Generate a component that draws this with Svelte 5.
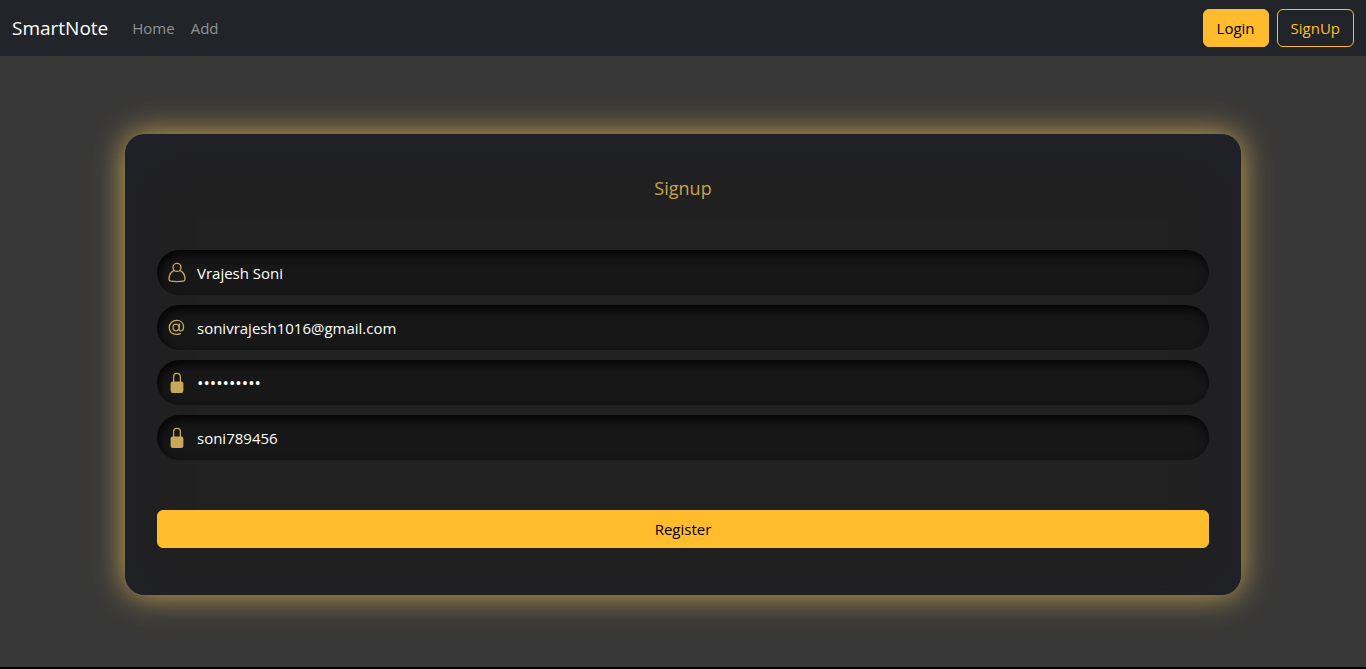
<script>
    let name = 'Vrajesh Soni'
    let email = 'sonivrajesh1016@gmail.com'
    let password = 'soni789456'
    let confirm = 'soni789456'
</script>

<div class="page">
    <nav class="navbar">
        <a class="brand" href="/">SmartNote</a>
        <a class="nav-link" href="/">Home</a>
        <a class="nav-link" href="/add">Add</a>
        <div class="actions">
            <button class="btn btn-warning" type="button">Login</button>
            <button class="btn btn-outline" type="button">SignUp</button>
        </div>
    </nav>

    <main class="container">
        <form class="card" on:submit|preventDefault>
            <h1 class="heading">Signup</h1>

            <div class="fields">
                <label class="field">
                    <svg class="icon" viewBox="0 0 20 22" aria-hidden="true">
                        <circle class="line" cx="10" cy="5.4" r="4" />
                        <path class="line" d="M7.2 8.4C4 9.7 2.2 12.7 2 17c0 1.3.6 2 1.800 2.100 4.200.6 8.200.6 12.400 0 1.200-.1 1.800-.8 1.800-2.100-.2-4.300-2-7.300-5.200-8.600" />
                    </svg>
                    <input type="text" aria-label="Name" bind:value={name} />
                </label>

                <label class="field">
                    <svg class="icon" viewBox="0 0 20 22" aria-hidden="true">
                        <ellipse class="line" cx="9" cy="10.5" rx="3" ry="3.4" />
                        <path class="line" d="M12.6 7.1l-.5 4.700c-.1 1.400.4 2.100 1.500 2.100 1.700 0 2.900-1.800 2.900-4.200 0-3.700-2.800-6.300-6.800-6.300-4.300 0-7.400 3-7.400 7.200 0 4.100 2.900 6.800 7.100 6.800 1.500 0 2.900-.3 4-.8" />
                    </svg>
                    <input type="email" aria-label="Email" bind:value={email} />
                </label>

                <label class="field">
                    <svg class="icon" viewBox="0 0 20 22" aria-hidden="true">
                        <path class="line" d="M6.600 10V5c0-2.300 1.300-3.700 3.400-3.700s3.400 1.400 3.400 3.700v5" />
                        <rect class="solid" x="3.6" y="9.5" width="12.8" height="11.5" rx="2.2" />
                    </svg>
                    <input class="password" type="password" aria-label="Password" bind:value={password} />
                </label>

                <label class="field">
                    <svg class="icon" viewBox="0 0 20 22" aria-hidden="true">
                        <path class="line" d="M6.600 10V5c0-2.300 1.300-3.700 3.400-3.700s3.400 1.400 3.400 3.700v5" />
                        <rect class="solid" x="3.6" y="9.5" width="12.8" height="11.5" rx="2.2" />
                    </svg>
                    <input type="text" aria-label="Confirm password" bind:value={confirm} />
                </label>
            </div>

            <button class="btn btn-warning" type="submit">Register</button>
        </form>
    </main>
</div>

<style>
    :global(body) {
        background: #000;
    }

    .page {
        min-height: 100vh;
        box-sizing: border-box;
        border-bottom: 2px solid #000;
        background: #383838;
        font-family: "Segoe UI", "Open Sans", "Noto Sans", sans-serif;
        font-size: 15px;
        line-height: 24px;
    }

    .navbar {
        display: flex;
        align-items: center;
        height: 56px;
        padding: 0 12px;
        background: #212529;
    }

    .brand {
        margin-right: 16px;
        color: #fff;
        font-size: 19px;
        text-decoration: none;
    }

    .nav-link {
        padding: 8px;
        color: #909294;
        text-decoration: none;
    }

    .actions {
        display: flex;
        gap: 8px;
        margin-left: auto;
    }

    .btn {
        padding: 6px 13px;
        border: 1px solid #ffbd2e;
        border-radius: 6px;
        font: inherit;
        cursor: pointer;
    }

    .btn-warning {
        background: #ffbd2e;
        color: #000;
    }

    .btn-outline {
        background: transparent;
        color: #ffbd2e;
    }

    .container {
        max-width: 1116px;
        margin: 0 auto;
        padding: 78px 12px 72px;
    }

    .card {
        display: flex;
        flex-direction: column;
        padding: 40px 32px 47px;
        border-radius: 20px;
        background: #212121;
        /* gold glow outside, blue tint fading in from the top edge */
        box-shadow: 0 0 32px #cda852, inset 0 12px 60px #20212c;
    }

    .heading {
        margin: 0 0 48px;
        color: #c9a450;
        font-size: 18px;
        font-weight: 400;
        line-height: 28px;
        text-align: center;
    }

    .fields {
        display: flex;
        flex-direction: column;
        gap: 10px;
        margin-bottom: 50px;
    }

    .field {
        display: flex;
        align-items: center;
        gap: 10px;
        height: 45px;
        padding: 0 10px;
        border-radius: 25px;
        background: #171717;
        box-shadow: inset 2px 5px 10px #050505;
    }

    .icon {
        flex: none;
        width: 20px;
        height: 22px;
    }

    .line {
        fill: none;
        stroke: #c9a85c;
        stroke-width: 1.3;
        stroke-linecap: round;
        stroke-linejoin: round;
    }

    .solid {
        fill: #c9a85c;
    }

    input {
        flex: 1;
        min-width: 0;
        padding: 0;
        border: none;
        outline: none;
        background: none;
        color: #fff;
        font: inherit;
    }

    .password {
        font-size: 17px;
    }
</style>
